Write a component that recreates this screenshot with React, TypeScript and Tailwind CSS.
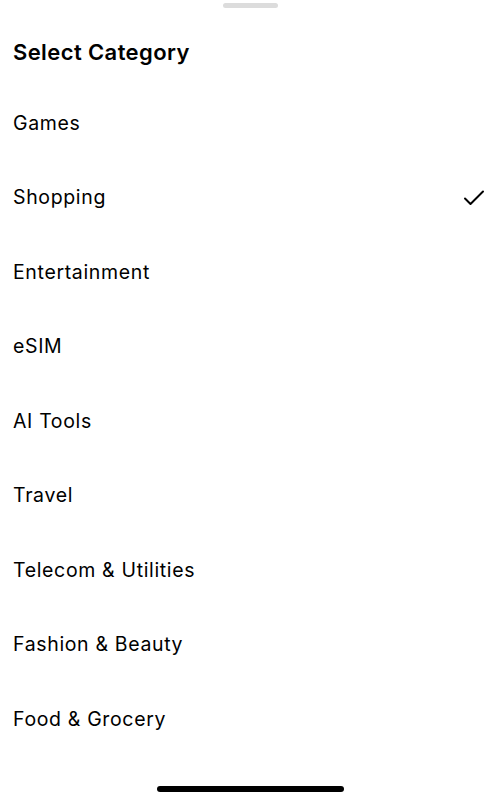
import { Fragment } from 'react';

const CATEGORIES = [
  'Games',
  'Shopping',
  'Entertainment',
  'eSIM',
  'AI Tools',
  'Travel',
  'Telecom & Utilities',
  'Fashion & Beauty',
  'Food & Grocery',
];

const SELECTED = 'Shopping';

function Check() {
  return (
    <svg width="22" height="16" viewBox="0 0 22 16" fill="none" className="text-black">
      <path d="M2 8.5L7.5 14L20 1.5" stroke="currentColor" strokeWidth="2" strokeLinecap="round" strokeLinejoin="round" />
    </svg>
  );
}

export default function App() {
  return (
    <div
      className="flex min-h-[798px] w-full flex-col bg-white text-black"
      style={{ fontFamily: 'Inter, "Noto Sans", sans-serif' }}
    >
      <div className="flex justify-center pl-[9px] pt-[3px]">
        <div className="h-[5px] w-[55px] rounded-full bg-[#dcdcdc]" />
      </div>
      <h1 className="mt-[30px] px-[13px] text-[22px] font-semibold leading-[28px] tracking-[0.4px]">
        Select Category
      </h1>
      <ul className="mt-[20px] px-[13px]">
        {CATEGORIES.map((c) => (
          <Fragment key={c}>
            <li className="flex h-[74.5px] items-center justify-between">
              <span className="text-[19.5px] leading-none tracking-[0.65px]">{c}</span>
              {c === SELECTED && (
                <span className="mr-[-6px]">
                  <Check />
                </span>
              )}
            </li>
          </Fragment>
        ))}
      </ul>
      <div className="mt-auto flex justify-center pb-[6px] pl-[9px]">
        <div className="h-[6px] w-[187px] rounded-full bg-black" />
      </div>
    </div>
  );
}
